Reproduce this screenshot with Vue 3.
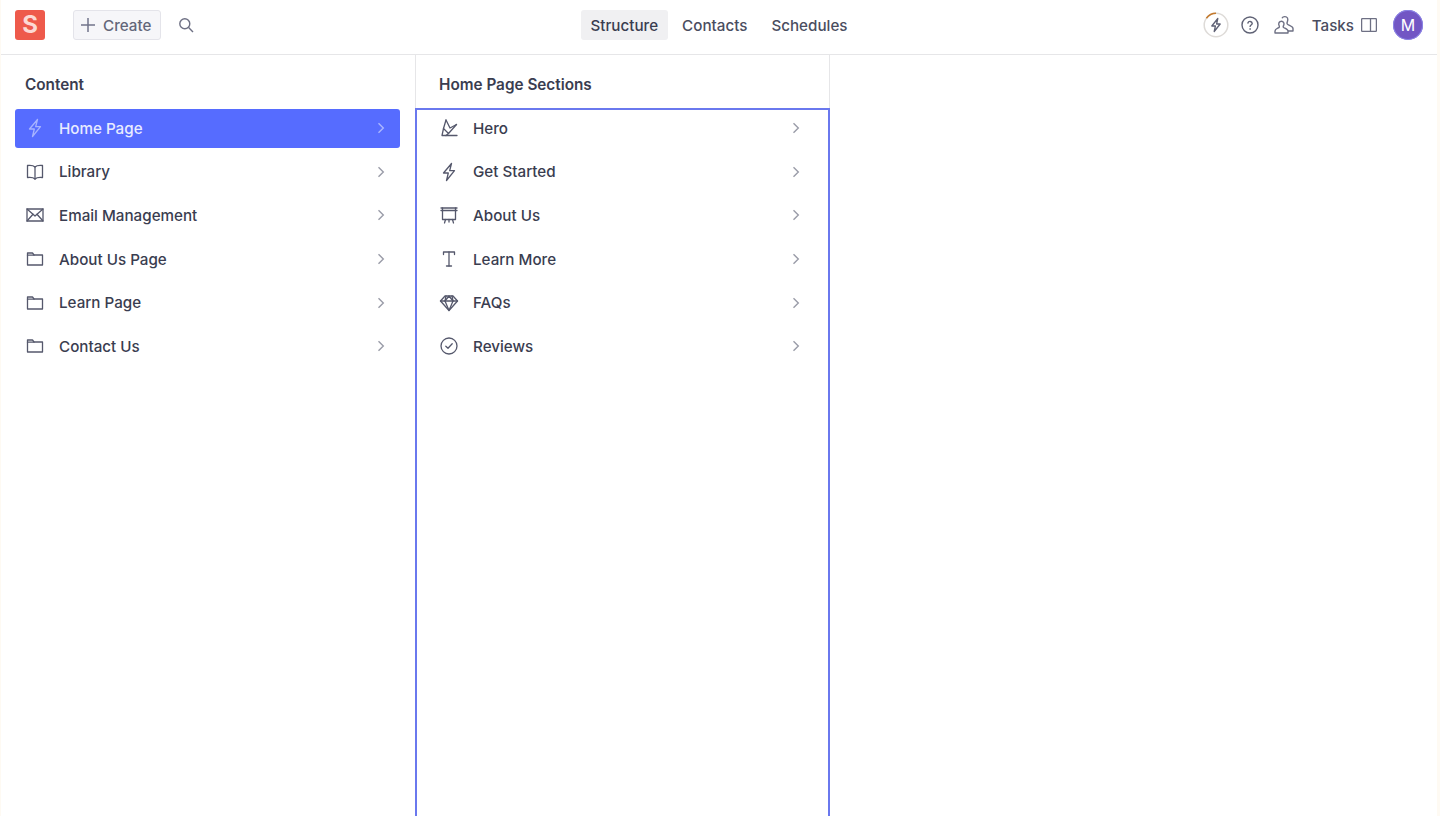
<template>
  <div class="page">
    <header class="topbar">
      <div class="left">
        <div class="logo">S</div>
        <button class="create">
          <svg class="plus" viewBox="0 0 16 16" width="16" height="16"><path d="M8 1v14M1 8h14" /></svg>
          Create
        </button>
        <svg class="search" viewBox="0 0 16 16" width="16" height="16"><circle cx="6.8" cy="6.8" r="5" /><path d="M10.6 10.6 15 15" /></svg>
      </div>
      <nav class="tabs">
        <a v-for="tab in tabs" :key="tab" class="tab" :class="{ active: tab === 'Structure' }">{{ tab }}</a>
      </nav>
      <div class="right">
        <svg class="ring" viewBox="0 0 26 26" width="26" height="26">
          <circle cx="13" cy="13" r="11.8" class="ring-bg" />
          <path d="M3.4 6.2A11.8 11.8 0 0 1 13 1.2" class="ring-on" />
          <path d="M14.8 6.5 8.8 14h3.6l-1.2 5.5 6-7.5h-3.6z" class="bolt" />
        </svg>
        <svg class="help" viewBox="0 0 18 18" width="18" height="18">
          <circle cx="9" cy="9" r="8" />
          <path d="M6.9 7a2.2 2.2 0 0 1 4.3.4c0 1.4-2.1 1.7-2.1 3" />
          <path d="M9.1 12.6v.6" />
        </svg>
        <svg class="people" viewBox="0 0 20 20" width="20" height="20">
          <path d="M8 3.2C9 1.2 12.4 1 13.5 3c.9 1.700-.1 3.500-.5 5-.3 1.100 1 1.700 2.500 2.400 1.900.9 3.500 1.700 3.500 3.100V16h-5" />
          <path d="M6.300 6.500c1.500-.8 3.700.2 3.700 2.300 0 1.400-1 2.400-.8 3.300.2 1 4.800 1.500 4.800 3.900V18H1v-2c0-2.300 3.700-2.800 4.300-3.900.5-.9-.6-1.800-.6-3.100 0-1 .6-2 1.600-2.500z" />
        </svg>
        <span class="tasks">Tasks</span>
        <svg class="panel" viewBox="0 0 16 14" width="16" height="14"><rect x=".6" y=".6" width="14.800" height="12.800" rx="1" /><path d="M9.500.6v12.800" /></svg>
        <div class="avatar">M</div>
      </div>
    </header>

    <main class="columns">
      <section class="column">
        <h2 class="title">Content</h2>
        <ul class="list">
          <li v-for="item in content" :key="item.label" class="row" :class="{ selected: item.selected }">
            <svg class="icon" viewBox="0 0 20 20" width="20" height="20"><path v-for="d in icons[item.icon]" :key="d" :d="d" /></svg>
            <span class="label">{{ item.label }}</span>
            <svg class="chev" viewBox="0 0 8 12" width="8" height="12"><path d="M1.500 1.200 6.300 6l-4.800 4.800" /></svg>
          </li>
        </ul>
      </section>
      <section class="column second">
        <h2 class="title">Home Page Sections</h2>
        <ul class="list outlined">
          <li v-for="item in sections" :key="item.label" class="row">
            <svg class="icon" viewBox="0 0 20 20" width="20" height="20"><path v-for="d in icons[item.icon]" :key="d" :d="d" /></svg>
            <span class="label">{{ item.label }}</span>
            <svg class="chev" viewBox="0 0 8 12" width="8" height="12"><path d="M1.500 1.200 6.300 6l-4.800 4.800" /></svg>
          </li>
        </ul>
      </section>
    </main>
  </div>
</template>

<script setup>
const tabs = ['Structure', 'Contacts', 'Schedules']

const icons = {
  bolt: ['M12.500 1.500 4.500 11h4.800L7.500 18.500l8-9.800h-4.800z'],
  book: ['M10 5C8.500 3.500 5 3.200 2.500 3.500v12c2.500-.3 6 0 7.500 1.500 1.500-1.500 5-1.800 7.500-1.500v-12c-2.500-.3-6 0-7.500 1.500z', 'M10 5v12'],
  mail: ['M2 4h16v12H2z', 'M2 4l8 7 8-7', 'M2 16l6-6.800', 'M18 16l-6-6.800'],
  folder: ['M2.500 16V4h5l1.500 2h8.500v10z', 'M2.500 6.200H9'],
  marker: ['M7 2 4.500 10.500 9.500 15.500 17.500 6.500', 'M7 2 11 10 17.500 6.500', 'M4.500 10.500 3 17.500h15', 'M9.500 15.500 7 17.500'],
  board: ['M2 3h16', 'M3.500 3v11.500h13V3', 'M6.500 14.500 5.500 18', 'M13.500 14.500l1 3.500', 'M10 14.500V17', 'M2 5.500h16'],
  text: ['M4.500 5.500V3h11v2.500', 'M10 3v14', 'M7.500 17h5'],
  gem: ['M6 3h8l4.500 5L10 17.500 1.500 8z', 'M1.500 8h17', 'M7 3 6 8l4 9.500L14 8l-1-5', 'M6 8l4-5 4 5'],
  check: ['M10 2a8 8 0 1 0 0 16 8 8 0 0 0 0-16z', 'M6.800 10.200l2.200 2.100 4.200-4.500']
}

const content = [
  { label: 'Home Page', icon: 'bolt', selected: true },
  { label: 'Library', icon: 'book' },
  { label: 'Email Management', icon: 'mail' },
  { label: 'About Us Page', icon: 'folder' },
  { label: 'Learn Page', icon: 'folder' },
  { label: 'Contact Us', icon: 'folder' }
]

const sections = [
  { label: 'Hero', icon: 'marker' },
  { label: 'Get Started', icon: 'bolt' },
  { label: 'About Us', icon: 'board' },
  { label: 'Learn More', icon: 'text' },
  { label: 'FAQs', icon: 'gem' },
  { label: 'Reviews', icon: 'check' }
]
</script>

<style>
html,
body {
  margin: 0;
  background: #fefaf3;
}
</style>

<style scoped>
.page {
  margin: 0 3px 0 1px;
  height: 816px;
  overflow: hidden;
  background: #fff;
  font-family: Inter, "Liberation Sans", sans-serif;
  font-size: 15.2px;
  color: #3a3d50;
  display: flex;
  flex-direction: column;
}

.topbar {
  height: 55px;
  box-sizing: border-box;
  flex: none;
  border-bottom: 1px solid #e6e6e8;
  display: grid;
  grid-template-columns: 1fr auto 1fr;
  align-items: center;
  padding: 0 14px 4px;
}

.left,
.right {
  display: flex;
  align-items: center;
}

.right {
  justify-content: flex-end;
}

.logo {
  width: 30px;
  height: 30px;
  border-radius: 3px;
  background: #ee5a4b;
  color: #fcd9d4;
  font-size: 24px;
  font-weight: 700;
  line-height: 30px;
  text-align: center;
}

.create {
  margin-left: 28px;
  width: 88px;
  height: 30px;
  padding: 0 0 0 6px;
  display: flex;
  align-items: center;
  gap: 7px;
  background: #f6f6f9;
  border: 1px solid #e4e4ea;
  border-radius: 3px;
  font: 500 15.2px Inter, "Liberation Sans", sans-serif;
  color: #636679;
}

.plus {
  fill: none;
  stroke: #71748a;
  stroke-width: 1.500;
}

.search {
  margin-left: 17px;
  fill: none;
  stroke: #6e7084;
  stroke-width: 1.400;
}

.tabs {
  display: flex;
  gap: 5px;
}

.tab {
  height: 30px;
  line-height: 31px;
  padding: 0 9.500px;
  border-radius: 3px;
  font-weight: 500;
  color: #4a4d60;
}

.tab.active {
  background: #f0f0f2;
  color: #3a3d50;
}

.ring {
  fill: none;
}

.ring-bg {
  stroke: #dedbd8;
  stroke-width: 1.500;
}

.ring-on {
  stroke: #c47a2e;
  stroke-width: 1.500;
}

.bolt {
  stroke: #5e6074;
  stroke-width: 1.300;
  stroke-linejoin: round;
}

.help {
  margin-left: 12px;
  fill: none;
  stroke: #5f6275;
  stroke-width: 1.400;
  stroke-linecap: round;
}

.people {
  margin-left: 15px;
  fill: none;
  stroke: #6e7084;
  stroke-width: 1.400;
  stroke-linejoin: round;
}

.tasks {
  margin-left: 18px;
  font-weight: 500;
  color: #4a4d60;
}

.panel {
  margin-left: 7px;
  fill: none;
  stroke: #6e7084;
  stroke-width: 1.300;
}

.avatar {
  margin-left: 16px;
  width: 30px;
  height: 30px;
  border-radius: 50%;
  background: #7256c4;
  box-shadow: 0 0 0 1px #8b86e6 inset;
  color: #fff;
  font-size: 16px;
  font-weight: 400;
  line-height: 30px;
  text-align: center;
}

.columns {
  flex: 1;
  display: flex;
  min-height: 0;
}

.column {
  width: 415px;
  flex: none;
  display: flex;
  flex-direction: column;
  box-sizing: border-box;
  border-right: 1px solid #e6e6e8;
}

.column.second {
  width: 414px;
}

.title {
  margin: 0;
  height: 54px;
  padding-top: 20px;
  padding-left: 24px;
  box-sizing: border-box;
  font-size: 15.300px;
  font-weight: 600;
  line-height: 19px;
  color: #3a3d50;
}

.second .title {
  padding-left: 23px;
}

.list {
  list-style: none;
  margin: 0;
  padding: 0 15px 0 14px;
  flex: 1;
  display: flex;
  flex-direction: column;
  gap: 4.700px;
}

.list.outlined {
  margin: -1px -1px 0 -1px;
  padding: 0 13px 0 12px;
  border: 2px solid #6a78ee;
  border-bottom: 0;
}

.outlined .row:first-child {
  margin-top: -1px;
}

.row {
  height: 39px;
  box-sizing: border-box;
  padding: 0 15px 1px 10px;
  flex: none;
  display: flex;
  align-items: center;
  border-radius: 3px;
  font-weight: 500;
  color: #3a3d50;
}

.row.selected {
  background: #566cff;
  color: #e8ebff;
}

.icon {
  flex: none;
  fill: none;
  stroke: #55586c;
  stroke-width: 1.300;
  stroke-linejoin: round;
  stroke-linecap: round;
}

.selected .icon {
  stroke: #a7b3ff;
}

.label {
  margin-left: 14px;
  flex: 1;
}

.chev {
  fill: none;
  stroke: #9a9ca8;
  stroke-width: 1.400;
}

.selected .chev {
  stroke: #abb6ff;
}
</style>
